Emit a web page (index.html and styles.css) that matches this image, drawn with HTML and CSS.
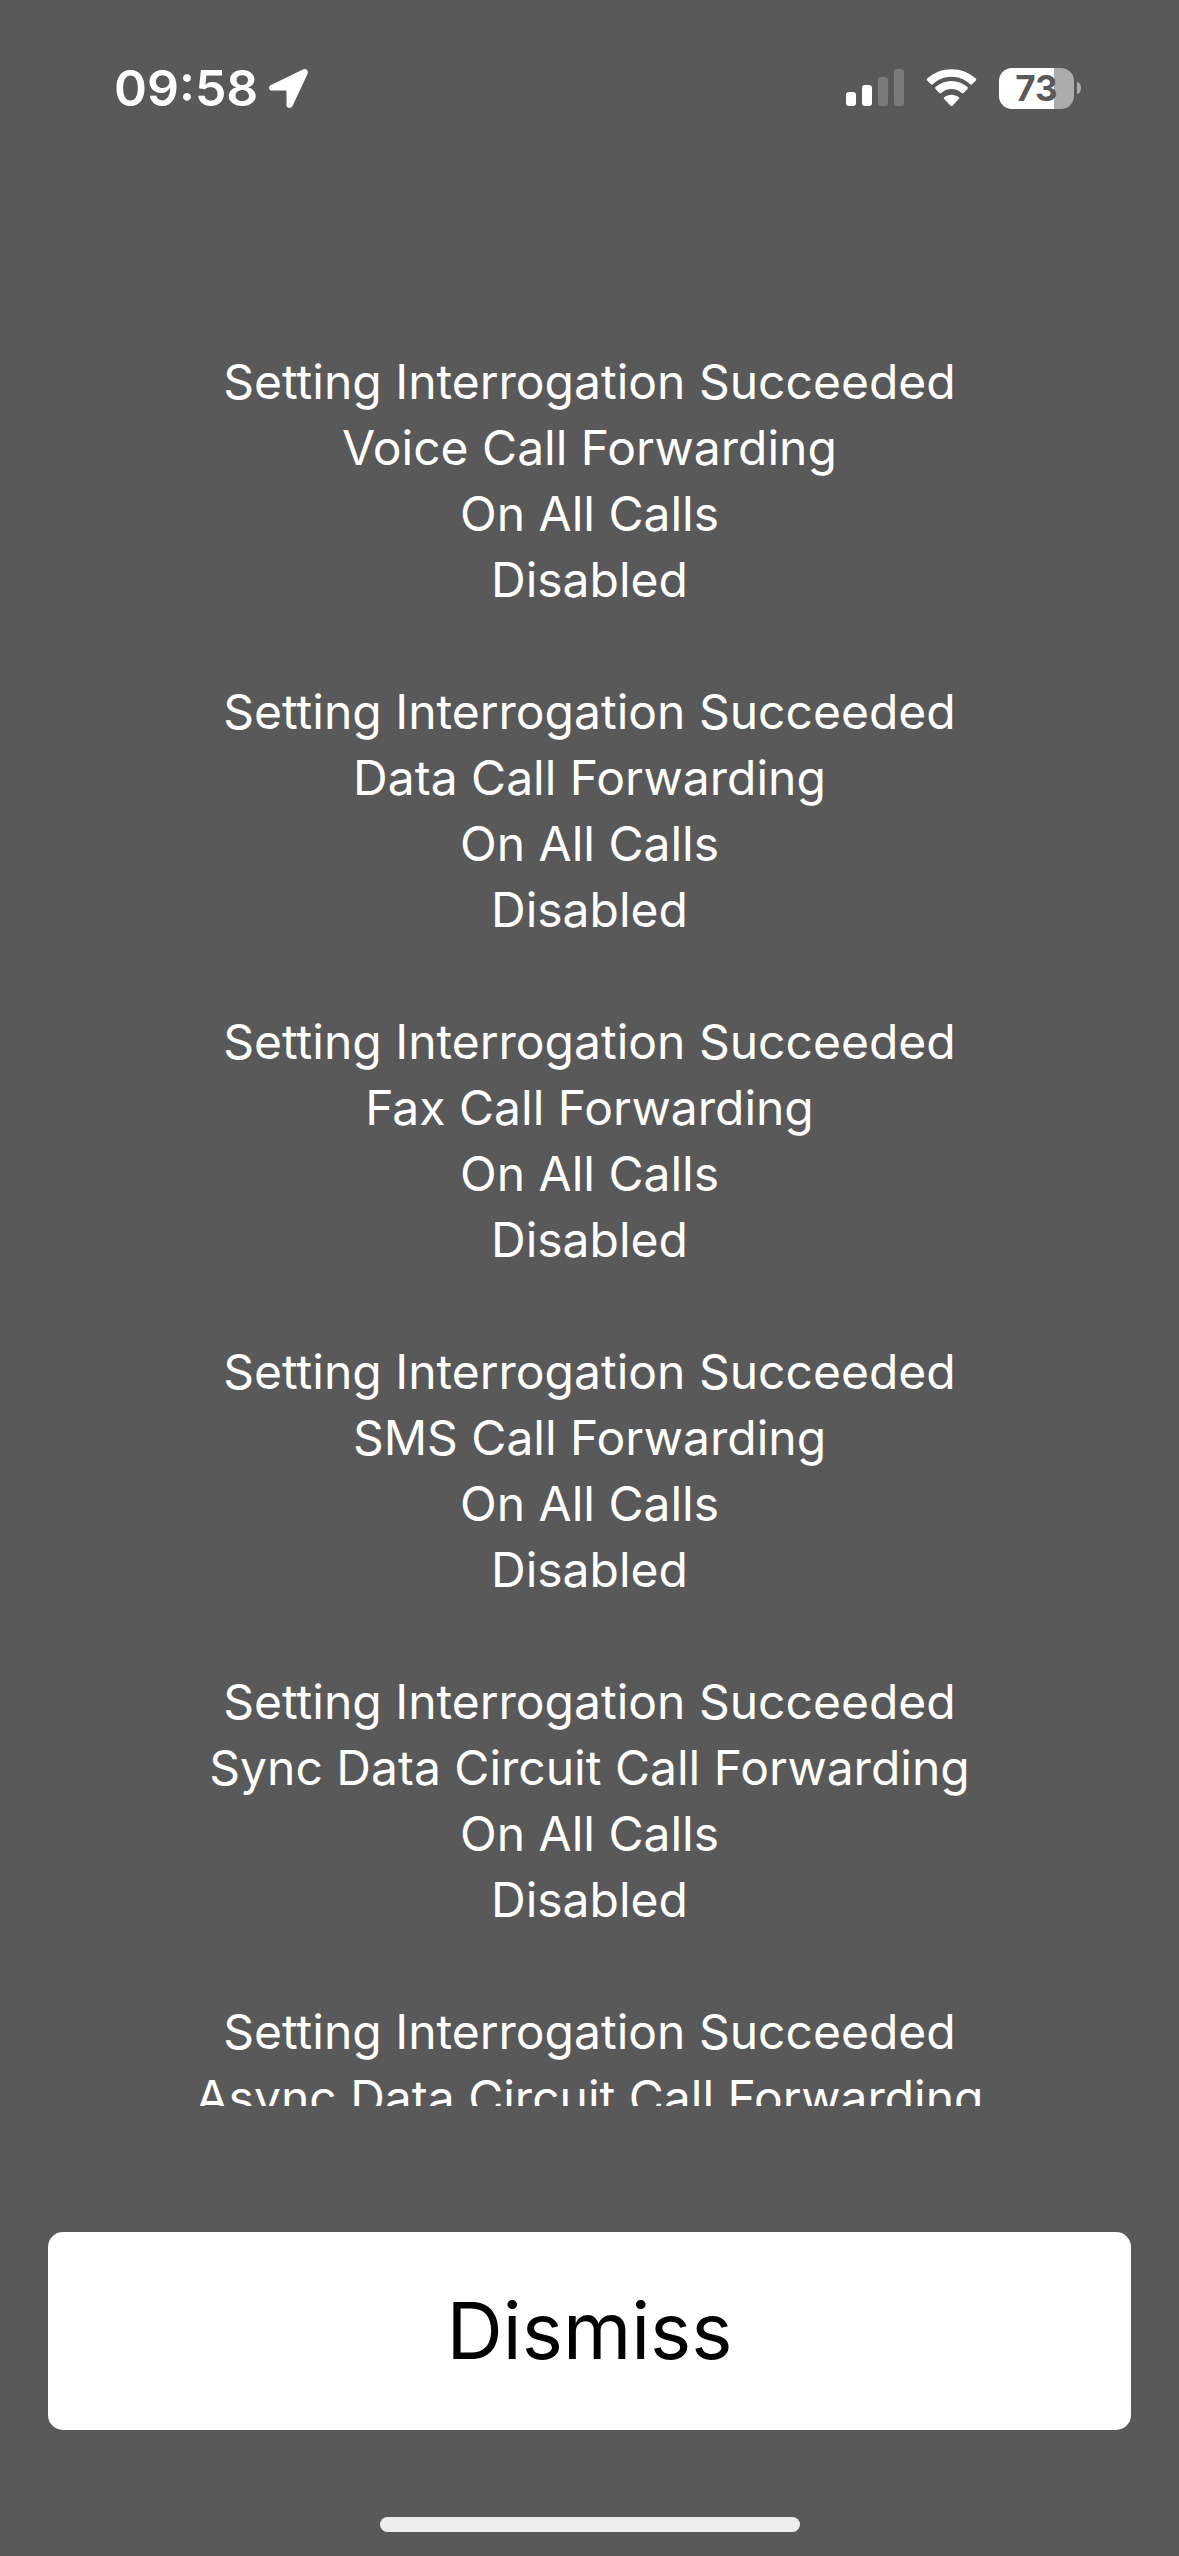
FILE: index.html
```html
<!DOCTYPE html>
<html lang="en">
<head>
<meta charset="utf-8">
<meta name="viewport" content="width=device-width, initial-scale=1">
<title>Call Forwarding</title>
<link rel="stylesheet" href="styles.css">
</head>
<body>
<header class="status">
  <div class="status-left">
    <time class="clock">09:58</time>
    <svg class="location" viewBox="0 0 39 39" aria-hidden="true"><path d="M2 16 34 .4c3-1.300 5.800 1 4.600 4.400L23.500 37c-1.500 3-6 2.500-6-1V22.500q0-1-1-1H3c-3.500 0-4-4-1-5.500Z"/></svg>
  </div>
  <div class="status-right">
    <svg class="signal" viewBox="0 0 58 38" aria-hidden="true"><rect y="23" width="10" height="14" rx="3"/><rect x="16" y="16" width="10" height="21" rx="3"/><rect class="dim" x="32" y="8" width="10" height="29" rx="3"/><rect class="dim" x="48" y="0" width="10" height="37" rx="3"/></svg>
    <svg class="wifi" viewBox="0 0 52 38" aria-hidden="true"><path d="M26 7.500c7.200 0 14 2.800 19 7.700q1 .8 2 0l3.800-3.900q.8-1 0-1.900C37-3.300 15-3.300 1.200 9.400q-.8.900 0 1.900L5 15.200q1 .8 2 0c5-4.900 11.800-7.700 19-7.700Z"/><path d="M26 20c4 0 7.600 1.500 10.400 4q1 .9 2 0l3.900-3.900q.9-1 0-2c-9.300-8.400-23.300-8.400-32.600 0q-.9 1 0 2l3.900 3.900q1 .9 2 0C18.400 21.500 22 20 26 20Z"/><path d="M33.500 30.300q.9-1 0-1.800c-4.300-3.500-10.700-3.500-15 0q-.9.800 0 1.800l6.600 6.700q.9.800 1.800 0Z"/></svg>
    <div class="battery"><span class="battery-body">73</span><span class="battery-tip"></span></div>
  </div>
</header>
<main class="results">
  <p class="result">Setting Interrogation Succeeded<br>Voice Call Forwarding<br>On All Calls<br>Disabled</p>
  <p class="result">Setting Interrogation Succeeded<br>Data Call Forwarding<br>On All Calls<br>Disabled</p>
  <p class="result">Setting Interrogation Succeeded<br>Fax Call Forwarding<br>On All Calls<br>Disabled</p>
  <p class="result">Setting Interrogation Succeeded<br>SMS Call Forwarding<br>On All Calls<br>Disabled</p>
  <p class="result">Setting Interrogation Succeeded<br>Sync Data Circuit Call Forwarding<br>On All Calls<br>Disabled</p>
  <p class="result">Setting Interrogation Succeeded<br>Async Data Circuit Call Forwarding</p>
</main>
<footer class="actions">
  <button class="dismiss" type="button">Dismiss</button>
  <div class="home-bar"></div>
</footer>
</body>
</html>
```

FILE: styles.css
```css
* { box-sizing: border-box; }
body {
  display: flex;
  flex-direction: column;
  height: 100vh;
  margin: 0;
  background: #595959;
  color: #fff;
  font-family: Inter, "Liberation Sans", sans-serif;
}
.status {
  display: flex;
  justify-content: space-between;
  flex: none;
  height: 349px;
  padding: 56px 98px 0 114px;
}
.status-left, .status-right {
  display: flex;
  align-items: center;
  height: 64px;
}
.status-left { gap: 11px; }
.status-right { gap: 22px; }
.clock { font-size: 50px; font-weight: 600; }
svg { display: block; fill: #fff; }
.location { width: 39px; height: 39px; }
.signal { width: 58px; height: 38px; }
.wifi { width: 51px; height: 38px; }
.dim { opacity: .2; }
.battery { display: flex; align-items: center; gap: 3px; }
.battery-body {
  width: 75px;
  height: 41px;
  border-radius: 13px;
  background: linear-gradient(90deg, #fff 73%, #acacac 73%);
  color: #595959;
  font-size: 35px;
  font-weight: 700;
  line-height: 41px;
  text-align: center;
}
.battery-tip {
  width: 4px;
  height: 12px;
  border-radius: 0 4px 4px 0 / 0 6px 6px 0;
  background: #acacac;
}
.results {
  flex: 1;
  min-height: 0;
  overflow: hidden;
  font-size: 48px;
  line-height: 66px;
  text-align: center;
}
.result { margin: 0 0 66px; }
.actions {
  display: flex;
  flex-direction: column;
  align-items: center;
  flex: none;
  padding: 126px 48px 24px;
}
.dismiss {
  width: 100%;
  height: 198px;
  border: 0;
  border-radius: 15px;
  background: #fff;
  color: #000;
  font: 400 78px/96px Inter, "Liberation Sans", sans-serif;
}
.home-bar {
  width: 420px;
  max-width: 50%;
  height: 15px;
  margin-top: 87px;
  border-radius: 8px;
  background: #eee;
}
```
